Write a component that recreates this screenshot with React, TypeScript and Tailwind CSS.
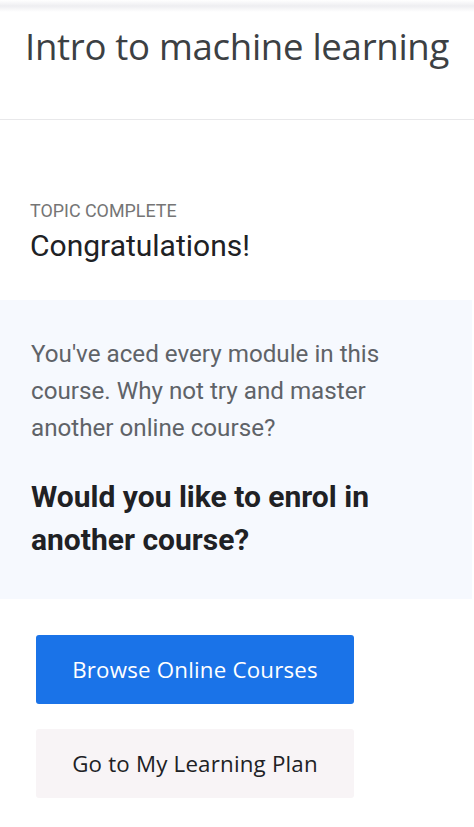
export default function App() {
  return (
    <div className="w-[474px] min-h-[827px] bg-white" style={{ fontFamily: "Roboto, 'Liberation Sans', sans-serif" }}>
      <div className="h-[12px] bg-gradient-to-b from-white via-[#eeeef1] to-white" />
      <div className="h-[108px] border-b border-[#e8e8ea] px-[25px] pt-[12px]">
        <h1 className="text-[36.6px] leading-[44px] text-[#3c4043] font-['Open_Sans',sans-serif] tracking-[-0.3px] whitespace-nowrap">
          Intro to machine learning
        </h1>
      </div>
      <div className="px-[30px] pt-[81px] pb-[37px]">
        <div className="text-[17.9px] leading-[20px] text-[#757575]">TOPIC COMPLETE</div>
        <div className="mt-[8px] text-[30px] leading-[34px] text-[#202124]">Congratulations!</div>
      </div>
      <div className="mr-[2px] bg-[#f6f9fe] px-[31px] pt-[36px] pb-[38px]">
        <p className="text-[24.2px] leading-[37px] text-[#5f6368] pr-[40px]">
          You've aced every module in this course. Why not try and master another online course?
        </p>
        <p className="mt-[28px] text-[30px] leading-[43px] font-bold text-[#202124] pr-[40px]">
          Would you like to enrol in another course?
        </p>
      </div>
      <div className="flex flex-col gap-[25px] px-[36px] pt-[36px]">
        <button className="w-[318px] h-[69px] rounded-[3px] bg-[#1a73e8] text-white text-[22.3px] font-medium font-['Open_Sans',sans-serif] tracking-[0.2px]">
          Browse Online Courses
        </button>
        <button className="w-[318px] h-[69px] rounded-[3px] bg-[#f8f4f6] text-[#202124] text-[22.3px] font-medium font-['Open_Sans',sans-serif] tracking-[0.2px]">
          Go to My Learning Plan
        </button>
      </div>
    </div>
  );
}
